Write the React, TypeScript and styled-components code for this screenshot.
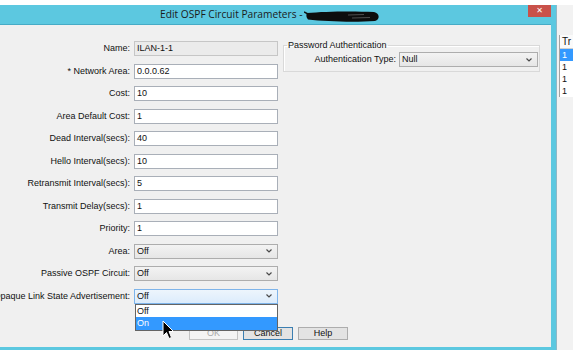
import React from "react";
import styled, { createGlobalStyle, css } from "styled-components";

const GlobalStyle = createGlobalStyle`
  html, body { margin: 0; padding: 0; background: #ffffff; }
  body { font-family: "Liberation Sans", Arial, sans-serif; }
  * { box-sizing: border-box; }
`;

const UI_FONT = css`
  font-family: "Liberation Sans", Arial, sans-serif;
  font-size: 9px;
  color: #111;
`;

const Screen = styled.div`
  position: relative;
  width: 573px;
  height: 357px;
  display: flex;
  align-items: flex-start;
  background: #ffffff;
  overflow: hidden;
`;

const Window = styled.div`
  width: 557px;
  height: 345px;
  margin-top: 5px;
  display: flex;
  flex-direction: column;
  background: #5cc8e0;
  padding: 0 5px 3px 0;
  border-right: 1px solid #8fb8c6;
`;

const TitleBar = styled.div`
  height: 19px;
  flex: none;
  display: flex;
  align-items: center;
  padding-left: 160px;
  font-family: "Open Sans", "Noto Sans", sans-serif;
  font-size: 10.2px;
  color: #1b1b1b;
  white-space: nowrap;
`;

const TitleText = styled.span`
  line-height: 19px;
`;

const Scribble = styled.svg`
  margin-left: 2px;
  margin-top: 2px;
  flex: none;
`;

const CloseButton = styled.div`
  margin-left: auto;
  align-self: flex-start;
  width: 23px;
  height: 12px;
  background: #c9514a;
  color: #ffffff;
  display: flex;
  align-items: center;
  justify-content: center;
  font-family: "DejaVu Sans", sans-serif;
  font-size: 8px;
  line-height: 1;
`;

const Panel = styled.div`
  flex: 1;
  background: #f0f0f0;
  border-top: 1px solid #46abc6;
  padding-top: 14px;
  display: flex;
  flex-direction: column;
`;

const TopRow = styled.div`
  display: flex;
  align-items: flex-start;
  gap: 5px;
`;

const FormGrid = styled.div`
  margin-top: 2px;
  display: grid;
  grid-template-columns: 130px 144px;
  grid-auto-rows: 15px;
  column-gap: 4px;
  row-gap: 7.5px;
`;

const Label = styled.div`
  ${UI_FONT};
  display: flex;
  justify-content: flex-end;
  align-items: center;
  white-space: nowrap;
  line-height: 15px;
`;

const TextBox = styled.div<{ $disabled?: boolean }>`
  ${UI_FONT};
  height: 15px;
  border: 1px solid ${(p) => (p.$disabled ? "#c6c6c6" : "#a9afb8")};
  background: ${(p) => (p.$disabled ? "#ebebeb" : "#ffffff")};
  padding-left: 2px;
  line-height: 13px;
  white-space: nowrap;
`;

const SelectWrap = styled.div`
  position: relative;
`;

const SelectBox = styled.div<{ $active?: boolean; $width?: number }>`
  ${UI_FONT};
  height: 15px;
  width: ${(p) => (p.$width ? `${p.$width}px` : "auto")};
  border: 1px solid ${(p) => (p.$active ? "#7eb4ea" : "#adadad")};
  background: ${(p) =>
    p.$active
      ? "linear-gradient(#edf5fc, #dcecfc)"
      : "linear-gradient(#f3f3f3, #e6e6e6)"};
  padding: 0 5px 0 2px;
  line-height: 13px;
  display: flex;
  align-items: center;
  justify-content: space-between;
  white-space: nowrap;
`;

const Chevron = () => (
  <svg width="6" height="4" viewBox="0 0 6 4">
    <polyline points="0.5,0.5 3,3 5.5,0.5" fill="none" stroke="#4a4a4a" strokeWidth="1.2" />
  </svg>
);

const DropList = styled.div`
  position: absolute;
  top: 100%;
  left: 1px;
  width: 143px;
  border: 1px solid #646464;
  background: #ffffff;
  z-index: 2;
`;

const DropItem = styled.div<{ $selected?: boolean }>`
  ${UI_FONT};
  height: 12.5px;
  line-height: 12.5px;
  padding-left: 1px;
  background: ${(p) => (p.$selected ? "#3399ff" : "#ffffff")};
  color: ${(p) => (p.$selected ? "#ffffff" : "#111")};
`;

const GroupBox = styled.fieldset`
  width: 257px;
  margin: 0;
  padding: 1px 1px 4px 0;
  border: 1px solid #d9d9d9;
  box-shadow: inset 1px 1px 0 #ffffff;
`;

const GroupLegend = styled.legend`
  ${UI_FONT};
  line-height: 12px;
  padding: 0 1px;
  margin-left: 3px;
`;

const GroupRow = styled.div`
  display: flex;
  justify-content: flex-end;
  align-items: center;
  gap: 3px;
`;

const ButtonRow = styled.div`
  margin-top: 23px;
  padding-left: 189px;
  display: flex;
  gap: 5px;
`;

const Button = styled.div<{ $kind?: "default" | "disabled" }>`
  ${UI_FONT};
  width: ${(p) => (p.$kind === "disabled" ? "49px" : "50px")};
  height: 13px;
  line-height: 11px;
  text-align: center;
  border: 1px solid
    ${(p) =>
      p.$kind === "default" ? "#3c7fb1" : p.$kind === "disabled" ? "#c4c4c4" : "#adadad"};
  background: ${(p) => (p.$kind === "disabled" ? "#f4f4f4" : "#e3e3e3")};
  color: ${(p) => (p.$kind === "disabled" ? "#a9a9a9" : "#111")};
`;

const Strip = styled.div`
  width: 16px;
  height: 345px;
  margin-top: 5px;
  background: #f2f2f2;
  padding: 30px 0 0 2px;
`;

const StripTable = styled.div`
  border-left: 1px solid #a3a3a3;
  background: #ffffff;
`;

const StripHeader = styled.div`
  ${UI_FONT};
  font-size: 10px;
  height: 14px;
  line-height: 13px;
  padding-left: 2px;
  border-bottom: 1px solid #d0d0d0;
  background: #fafafa;
  overflow: hidden;
  white-space: nowrap;
`;

const StripCell = styled.div<{ $selected?: boolean }>`
  ${UI_FONT};
  height: 12px;
  line-height: 12px;
  padding-left: 2px;
  background: ${(p) => (p.$selected ? "#3399ff" : "#ffffff")};
  color: ${(p) => (p.$selected ? "#ffffff" : "#111")};
`;

const Cursor = styled.svg`
  position: absolute;
  left: 162px;
  top: 320px;
  z-index: 5;
`;

type Row =
  | { label: string; kind: "text"; value: string; disabled?: boolean }
  | { label: string; kind: "select"; value: string; open?: boolean };

const rows: Row[] = [
  { label: "Name:", kind: "text", value: "ILAN-1-1", disabled: true },
  { label: "* Network Area:", kind: "text", value: "0.0.0.62" },
  { label: "Cost:", kind: "text", value: "10" },
  { label: "Area Default Cost:", kind: "text", value: "1" },
  { label: "Dead Interval(secs):", kind: "text", value: "40" },
  { label: "Hello Interval(secs):", kind: "text", value: "10" },
  { label: "Retransmit Interval(secs):", kind: "text", value: "5" },
  { label: "Transmit Delay(secs):", kind: "text", value: "1" },
  { label: "Priority:", kind: "text", value: "1" },
  { label: "Area:", kind: "select", value: "Off" },
  { label: "Passive OSPF Circuit:", kind: "select", value: "Off" },
  { label: "Opaque Link State Advertisement:", kind: "select", value: "Off", open: true },
];

export default function App() {
  return (
    <>
      <GlobalStyle />
      <Screen>
        <Window>
          <TitleBar>
            <TitleText>Edit OSPF Circuit Parameters -</TitleText>
            <Scribble width="76" height="14" viewBox="0 0 76 14">
              <path d="M0 3 L4 5" stroke="#111" strokeWidth="1.5" />
              <path
                d="M3 4 C 20 2.5, 48 2, 70 3 C 76 4, 76 11, 71 12 C 50 13.5, 22 12.5, 4 10.5 C 2 8, 2 6, 3 4 Z"
                fill="#0d0d0d"
              />
              <path d="M44 6 L60 5.5 M48 9 L66 8.5" stroke="#6a6a6a" strokeWidth="0.7" />
            </Scribble>
            <CloseButton>✕</CloseButton>
          </TitleBar>
          <Panel>
            <TopRow>
              <FormGrid>
                {rows.map((r) => (
                  <React.Fragment key={r.label}>
                    <Label>{r.label}</Label>
                    {r.kind === "text" ? (
                      <TextBox $disabled={r.disabled}>{r.value}</TextBox>
                    ) : (
                      <SelectWrap>
                        <SelectBox $active={r.open}>
                          <span>{r.value}</span>
                          <Chevron />
                        </SelectBox>
                        {r.open && (
                          <DropList>
                            <DropItem>Off</DropItem>
                            <DropItem $selected>On</DropItem>
                          </DropList>
                        )}
                      </SelectWrap>
                    )}
                  </React.Fragment>
                ))}
              </FormGrid>
              <GroupBox>
                <GroupLegend>Password Authentication</GroupLegend>
                <GroupRow>
                  <Label>Authentication Type:</Label>
                  <SelectBox $width={139}>
                    <span>Null</span>
                    <Chevron />
                  </SelectBox>
                </GroupRow>
              </GroupBox>
            </TopRow>
            <ButtonRow>
              <Button $kind="disabled">OK</Button>
              <Button $kind="default">Cancel</Button>
              <Button>Help</Button>
            </ButtonRow>
          </Panel>
        </Window>
        <Strip>
          <StripTable>
            <StripHeader>Tr</StripHeader>
            <StripCell $selected>1</StripCell>
            <StripCell>1</StripCell>
            <StripCell>1</StripCell>
            <StripCell>1</StripCell>
          </StripTable>
        </Strip>
        <Cursor width="13" height="20" viewBox="0 0 13 20">
          <path
            d="M1 1 L1 16 L4.5 12.5 L7 18.5 L9.5 17.5 L7 11.5 L11.5 11.5 Z"
            fill="#000"
            stroke="#fff"
            strokeWidth="1"
            strokeLinejoin="round"
          />
        </Cursor>
      </Screen>
    </>
  );
}
